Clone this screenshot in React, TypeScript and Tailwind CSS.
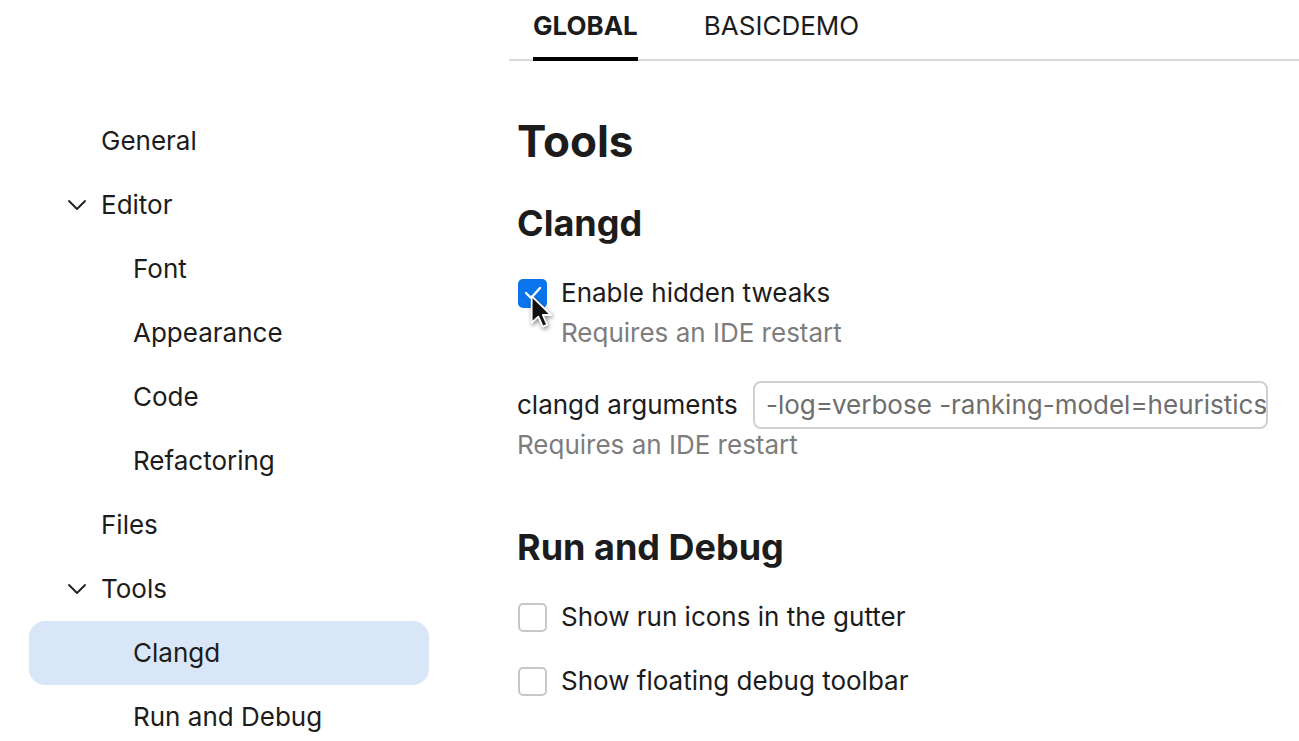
import React from "react";

const font = { fontFamily: "Inter, 'Noto Sans', sans-serif" };

function Chevron() {
  return (
    <svg width="20" height="12" viewBox="0 0 20 12" className="shrink-0">
      <path d="M2 2 L10 10 L18 2" fill="none" stroke="#1c1c1c" strokeWidth="1.8" strokeLinecap="round" strokeLinejoin="round" />
    </svg>
  );
}

type Item = { label: string; level: 1 | 2; chevron?: boolean; active?: boolean };

const items: Item[] = [
  { label: "General", level: 1 },
  { label: "Editor", level: 1, chevron: true },
  { label: "Font", level: 2 },
  { label: "Appearance", level: 2 },
  { label: "Code", level: 2 },
  { label: "Refactoring", level: 2 },
  { label: "Files", level: 1 },
  { label: "Tools", level: 1, chevron: true },
  { label: "Clangd", level: 2, active: true },
  { label: "Run and Debug", level: 2 },
];

function Sidebar() {
  return (
    <div className="w-[509px] shrink-0 pt-[109px] pl-[29px]">
      {items.map((it) => (
        <div
          key={it.label}
          className={`w-[400px] h-[64px] flex items-center rounded-[16px] ${it.active ? "bg-[#d8e6f8]" : ""}`}
        >
          {it.level === 1 ? (
            <div className="flex items-center">
              <div className="w-[72px] flex justify-end pr-[14px]">{it.chevron ? <Chevron /> : null}</div>
              <span className="text-[26px] leading-[32px] text-[#1c1c1c]">{it.label}</span>
            </div>
          ) : (
            <span className="pl-[104px] text-[26px] leading-[32px] text-[#1c1c1c]">{it.label}</span>
          )}
        </div>
      ))}
    </div>
  );
}

function Cursor() {
  return (
    <svg
      width="30"
      height="40"
      viewBox="0 0 26 36"
      className="absolute left-[12px] top-[16px] pointer-events-none"
      style={{ filter: "drop-shadow(1px 2px 2px rgba(0,0,0,0.45))" }}
    >
      <path
        d="M1 1 L1 25 L7 19.5 L11 28.5 L15 26.8 L11 18 L18.5 18 Z"
        fill="#111"
        stroke="#fff"
        strokeWidth="1.6"
        strokeLinejoin="round"
      />
    </svg>
  );
}

function CheckedBox() {
  return (
    <div className="relative w-[29px] h-[29px] shrink-0 ml-[1px]">
      <div className="w-[29px] h-[29px] rounded-[5px] bg-[#0a74ec] flex items-center justify-center">
        <svg width="20" height="16" viewBox="0 0 20 16">
          <path d="M3 8 L8 13 L17 3" fill="none" stroke="#fff" strokeWidth="2.4" strokeLinecap="round" strokeLinejoin="round" />
        </svg>
      </div>
      <Cursor />
    </div>
  );
}

function EmptyBox() {
  return <div className="w-[29px] h-[29px] shrink-0 ml-[1px] rounded-[5px] border-2 border-[#c8c8c8] bg-white" />;
}

export default function App() {
  return (
    <div className="w-[1299px] h-[741px] overflow-hidden bg-white flex" style={font}>
      <Sidebar />
      <div className="flex-1 flex flex-col">
        <div className="h-[61px] border-b-2 border-[#d9d9d9] flex items-stretch pl-[24px] gap-[66px]">
          <div className="-mb-[2px] border-b-4 border-black flex items-center pb-[6px]">
            <span className="text-[26px] font-bold leading-[32px] text-[#1c1c1c]">GLOBAL</span>
          </div>
          <div className="flex items-center pb-[8px]">
            <span className="text-[26px] leading-[32px] text-[#1c1c1c]">BASICDEMO</span>
          </div>
        </div>
        <div className="pl-[8px] flex flex-col">
          <h1 className="mt-[52px] h-[56px] leading-[56px] text-[44px] font-bold text-[#1c1c1c]">Tools</h1>
          <h2 className="mt-[30px] h-[48px] leading-[48px] text-[36px] font-bold text-[#1c1c1c]">Clangd</h2>
          <div className="mt-[26px] h-[40px] flex items-center gap-[14px]">
            <CheckedBox />
            <span className="text-[26px] leading-[32px] text-[#1c1c1c]">Enable hidden tweaks</span>
          </div>
          <div className="h-[40px] flex items-center pl-[44px]">
            <span className="text-[26px] leading-[32px] text-[#7d7d7d]">Requires an IDE restart</span>
          </div>
          <div className="mt-[28px] h-[48px] flex items-center">
            <span className="text-[26px] leading-[32px] text-[#1c1c1c] w-[236px]">clangd arguments</span>
            <div className="w-[515px] h-[48px] rounded-[8px] border-2 border-[#d0d0d0] flex items-center px-[11px] overflow-hidden">
              <span className="text-[26px] leading-[32px] text-[#6e6e6e] whitespace-nowrap">-log=verbose -ranking-model=heuristics</span>
            </div>
          </div>
          <div className="h-[32px] flex items-center">
            <span className="text-[26px] leading-[32px] text-[#7d7d7d]">Requires an IDE restart</span>
          </div>
          <h2 className="mt-[62px] h-[48px] leading-[48px] text-[36px] font-bold text-[#1c1c1c]">Run and Debug</h2>
          <div className="mt-[26px] h-[40px] flex items-center gap-[14px]">
            <EmptyBox />
            <span className="text-[26px] leading-[32px] text-[#1c1c1c]">Show run icons in the gutter</span>
          </div>
          <div className="mt-[24px] h-[40px] flex items-center gap-[14px]">
            <EmptyBox />
            <span className="text-[26px] leading-[32px] text-[#1c1c1c]">Show floating debug toolbar</span>
          </div>
        </div>
      </div>
    </div>
  );
}
